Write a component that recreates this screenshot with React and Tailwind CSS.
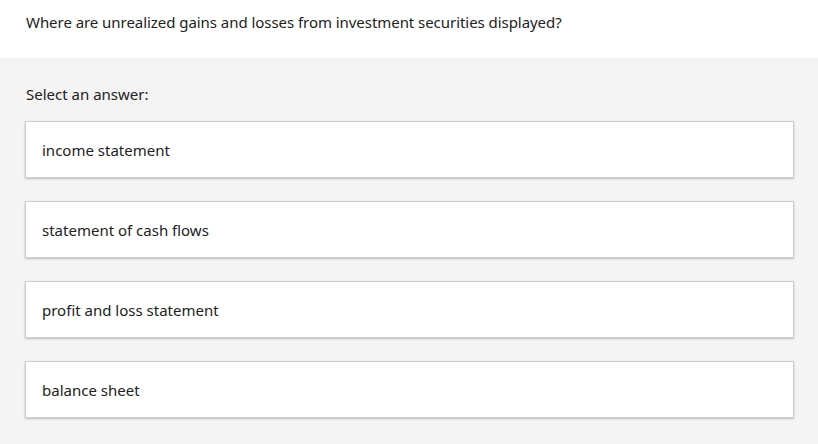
export default function App() {
  const options = [
    "income statement",
    "statement of cash flows",
    "profit and loss statement",
    "balance sheet",
  ];
  return (
    <div
      className="w-[818px] h-[444px] overflow-hidden bg-[#f4f4f4] text-[#222222]"
      style={{ fontFamily: '"Noto Sans", "Open Sans", sans-serif' }}
    >
      <div className="h-[58px] bg-white pl-[26px] pt-[11px] text-[15px] leading-[22px] tracking-[-0.05px]">
        Where are unrealized gains and losses from investment securities displayed?
      </div>
      <div className="pl-[25px] pr-[24px] pt-[25px]">
        <div className="pl-[1px] text-[15px] leading-[22px]">Select an answer:</div>
        <div className="mt-[16px] flex flex-col gap-[23px]">
          {options.map((o) => (
            <div
              key={o}
              className="h-[57px] bg-white border border-[#cccccc] shadow-[0_1px_2px_rgba(0,0,0,0.22)] flex items-center pl-[16px] pt-[2px] text-[15px]"
            >
              {o}
            </div>
          ))}
        </div>
      </div>
    </div>
  );
}
